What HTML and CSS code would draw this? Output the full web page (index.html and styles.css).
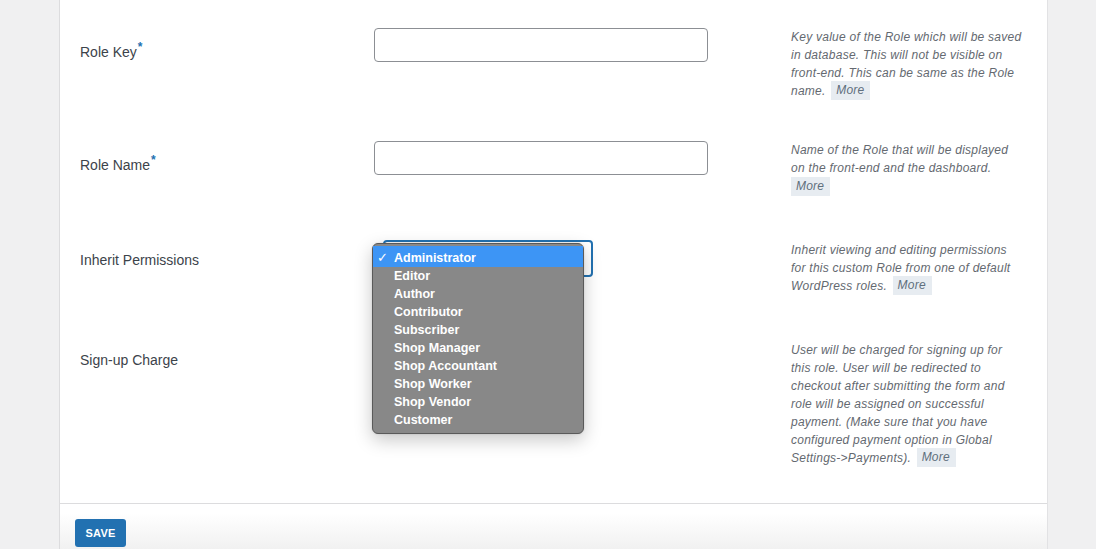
FILE: index.html
```html
<!DOCTYPE html>
<html lang="en">
<head>
<meta charset="utf-8">
<title>Role settings</title>
<link rel="stylesheet" href="styles.css">
</head>
<body>
<div class="page">
  <div class="panel">
    <div class="form">
      <div class="row row-first">
        <div class="label">Role Key<sup class="req">*</sup></div>
        <div class="field"><input class="text-input" type="text"></div>
        <div class="desc">Key value of the Role which will be saved<br>in database. This will not be visible on<br>front-end. This can be same as the Role<br>name. <span class="more">More</span></div>
      </div>
      <div class="row">
        <div class="label">Role Name<sup class="req">*</sup></div>
        <div class="field"><input class="text-input" type="text"></div>
        <div class="desc">Name of the Role that will be displayed<br>on the front-end and the dashboard.<br><span class="more more-solo">More</span></div>
      </div>
      <div class="row">
        <div class="label label-high">Inherit Permissions</div>
        <div class="field">
          <div class="select-wrap">
            <div class="select-box"></div>
            <ul class="menu">
              <li class="item active"><span class="check">✓</span>Administrator</li>
              <li class="item">Editor</li>
              <li class="item">Author</li>
              <li class="item">Contributor</li>
              <li class="item">Subscriber</li>
              <li class="item">Shop Manager</li>
              <li class="item">Shop Accountant</li>
              <li class="item">Shop Worker</li>
              <li class="item">Shop Vendor</li>
              <li class="item">Customer</li>
            </ul>
          </div>
        </div>
        <div class="desc">Inherit viewing and editing permissions<br>for this custom Role from one of default<br>WordPress roles. <span class="more">More</span></div>
      </div>
      <div class="row">
        <div class="label label-high">Sign-up Charge</div>
        <div class="field"></div>
        <div class="desc">User will be charged for signing up for<br>this role. User will be redirected to<br>checkout after submitting the form and<br>role will be assigned on successful<br>payment. (Make sure that you have<br>configured payment option in Global<br>Settings-&gt;Payments). <span class="more">More</span></div>
      </div>
    </div>
    <div class="footer">
      <button class="save" type="button">SAVE</button>
    </div>
  </div>
</div>
</body>
</html>
```
FILE: styles.css
```css
* { box-sizing: border-box; }
html, body { margin: 0; padding: 0; }
body {
  background: #f0f0f1;
  font-family: "Liberation Sans", Arial, sans-serif;
  height: 549px;
  overflow: hidden;
}
.page {
  padding-left: 59px;
}
.panel {
  width: 989px;
  background: #fff;
  border-left: 1px solid #dcdcde;
  border-right: 1px solid #e2e2e4;
  min-height: 549px;
}
.form {
  padding: 7px 0 16px 20px;
}
.row {
  display: flex;
  align-items: flex-start;
  padding: 20px 0;
  min-height: 100px;
}
.row-first { min-height: 113px; }
.label {
  width: 294px;
  flex: none;
  margin-top: 15px;
  font-size: 14px;
  line-height: 20px;
  color: #3c434a;
}
.label-high { margin-top: 10px; }
.req {
  color: #2271b1;
  font-size: 12px;
  font-weight: 700;
  line-height: 0;
  vertical-align: 6px;
  margin-left: 1px;
}
.field {
  width: 417px;
  flex: none;
  padding-top: 1px;
}
.text-input {
  display: block;
  width: 334px;
  height: 34px;
  border: 1px solid #8c8f94;
  border-radius: 4px;
  background: #fff;
  margin: 0;
  padding: 0 8px;
  font: inherit;
}
.select-wrap {
  position: relative;
  height: 36px;
}
.select-box {
  margin-left: 9px;
  margin-top: -1px;
  width: 210px;
  height: 37px;
  border: 2px solid #2271b1;
  border-radius: 4px;
  background: #fff;
}
.menu {
  position: absolute;
  left: -2px;
  top: 3px;
  width: 212px;
  margin: 0;
  padding: 5px 0 4px;
  list-style: none;
  background: #888888;
  border: 1px solid #5a5a5a;
  border-radius: 6px;
  box-shadow: 0 6px 18px rgba(0, 0, 0, 0.22), 0 0 2px rgba(0, 0, 0, 0.15);
  z-index: 2;
}
.item {
  position: relative;
  height: 18px;
  line-height: 18px;
  padding-left: 21px;
  font-size: 12.5px;
  font-weight: 700;
  color: #fff;
}
.item.active {
  background: #3d95f5;
  box-shadow: 0 -3px 0 #3d95f5;
}
.check {
  position: absolute;
  left: 4px;
  top: 0;
  font-family: "DejaVu Sans", sans-serif;
  font-weight: 400;
  font-size: 13px;
}
.desc {
  width: 250px;
  flex: none;
  padding-top: 1px;
  font-size: 12px;
  line-height: 18px;
  font-style: italic;
  letter-spacing: 0.25px;
  color: #646970;
}
.more {
  display: inline-block;
  background: #e7ecf1;
  color: #5f6f7d;
  padding: 0 6px 0 5px;
  line-height: 19px;
  margin-left: 2px;
  vertical-align: top;
  margin-top: -1px;
  letter-spacing: 0.2px;
}
.more-solo { margin-left: 0; margin-top: 0; }
.footer {
  border-top: 1px solid #dcdcde;
  padding: 15px 0 0 15px;
  height: 46px;
  background: linear-gradient(#ffffff 20%, #f1f1f1 100%);
}
.save {
  display: block;
  width: 51px;
  height: 28px;
  background: #2271b1;
  color: #fff;
  border: 0;
  border-radius: 3px;
  font-family: "Liberation Sans", Arial, sans-serif;
  font-size: 11px;
  font-weight: 700;
  letter-spacing: 0.2px;
  padding: 0;
}
```
